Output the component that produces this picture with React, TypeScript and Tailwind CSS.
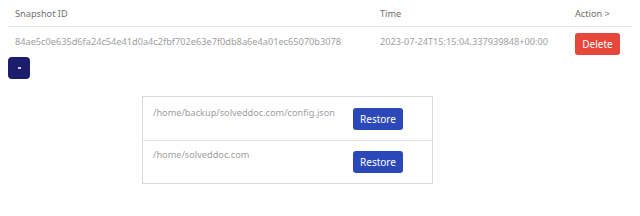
const snapshots = [
  {
    id: "84ae5c0e635d6fa24c54e41d0a4c2fbf702e63e7f0db8a6e4a01ec65070b3078",
    time: "2023-07-24T15:15:04.337939848+00:00",
    files: ["/home/backup/solveddoc.com/config.json", "/home/solveddoc.com"],
  },
]

export default function App() {
  return (
    <div className="w-[640px] h-[216px] bg-white px-2 font-['Noto_Sans','Open_Sans',sans-serif] text-[9.2px]">
      {/* header */}
      <div className="grid grid-cols-[365px_195px_1fr] border-b border-[#e8e8e8] text-[#707070]">
        <div className="pl-[7px] pt-[7px] pb-[6px] leading-[13px]">Snapshot ID</div>
        <div className="pl-[7px] pt-[7px] pb-[6px] leading-[13px]">Time</div>
        <div className="pl-[7px] pt-[7px] pb-[6px] leading-[13px]">Action &gt;</div>
      </div>

      {snapshots.map((s) => (
        <div key={s.id}>
          <div className="grid grid-cols-[365px_195px_1fr] items-start text-[#a0a0a0]">
            <div className="pl-[7px] pt-[8px] leading-[13px]">{s.id}</div>
            <div className="pl-[7px] pt-[8px] leading-[13px]">{s.time}</div>
            <div className="pl-[7px] pt-[6px]">
              <button className="w-[45px] h-[22px] rounded-[3px] bg-[#e5473b] text-white text-[10px] leading-none">
                Delete
              </button>
            </div>
          </div>

          {/* expand toggle */}
          <button className="mt-[2px] w-[22px] h-[22px] rounded-[4px] bg-[#1c1d6d] flex items-center justify-center">
            <span className="w-[3px] h-[2px] bg-[#c8c8e8]" />
          </button>

          <div className="ml-[134px] mt-[17px] w-[291px] border border-[#dcdcdc]">
            {s.files.map((f, i) => (
              <div
                key={f}
                className={`flex items-start px-[10px] ${i === 0 ? "h-[44px] border-b border-[#e4e4e4]" : "h-[42px]"}`}
              >
                <div className={`w-[200px] text-[#a0a0a0] leading-[13px] ${i === 0 ? "pt-[9px]" : "pt-[7px]"}`}>{f}</div>
                <button
                  className={`w-[50px] h-[22px] rounded-[3px] bg-[#2a48b8] text-white text-[10px] leading-none ${
                    i === 0 ? "mt-[11px]" : "mt-[10px]"
                  }`}
                >
                  Restore
                </button>
              </div>
            ))}
          </div>
        </div>
      ))}
    </div>
  )
}
